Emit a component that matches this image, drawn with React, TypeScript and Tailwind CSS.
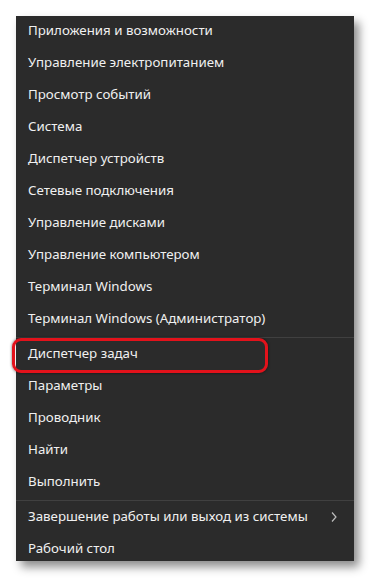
import React from "react";

const groups: string[][] = [
  [
    "Приложения и возможности",
    "Управление электропитанием",
    "Просмотр событий",
    "Система",
    "Диспетчер устройств",
    "Сетевые подключения",
    "Управление дисками",
    "Управление компьютером",
    "Терминал Windows",
    "Терминал Windows (Администратор)",
  ],
  ["Диспетчер задач", "Параметры", "Проводник", "Найти", "Выполнить"],
  ["Завершение работы или выход из системы", "Рабочий стол"],
];

export default function App() {
  return (
    <div
      className="w-[370px] h-[578px] bg-white pt-4 pl-4"
      style={{ fontFamily: '"Noto Sans", "Open Sans", sans-serif' }}
    >
      <div className="relative w-[338px] h-[545px] bg-[#2b2b2b] shadow-[5px_6px_9px_rgba(0,0,0,0.45)]">
        <div className="h-full overflow-hidden">
          {groups.map((g, gi) => (
            <div key={gi}>
              {gi > 0 && (
                <div className="h-[3px] flex items-center">
                  <div className="h-px w-full bg-[#404040]" />
                </div>
              )}
              {g.map((t) => (
                <div
                  key={t}
                  className="relative h-8 flex items-center pl-3 pr-4 pb-[2px] text-[13.3px] text-[#f0f0f0]"
                >
                  <span className="flex-1">{t}</span>
                  {t.startsWith("Завершение") && (
                    <svg width="8" height="12" viewBox="0 0 8 12">
                      <polyline
                        points="2,1.5 6,6 2,10.5"
                        fill="none"
                        stroke="#bdbdbd"
                        strokeWidth="1.2"
                      />
                    </svg>
                  )}
                </div>
              ))}
            </div>
          ))}
        </div>
        <div className="absolute left-[-4px] top-[322px] w-[256px] h-[35px] rounded-[9px] border-[3px] border-[#e3121b] shadow-[0_0_3px_rgba(0,0,0,0.6)]" />
      </div>
    </div>
  );
}
